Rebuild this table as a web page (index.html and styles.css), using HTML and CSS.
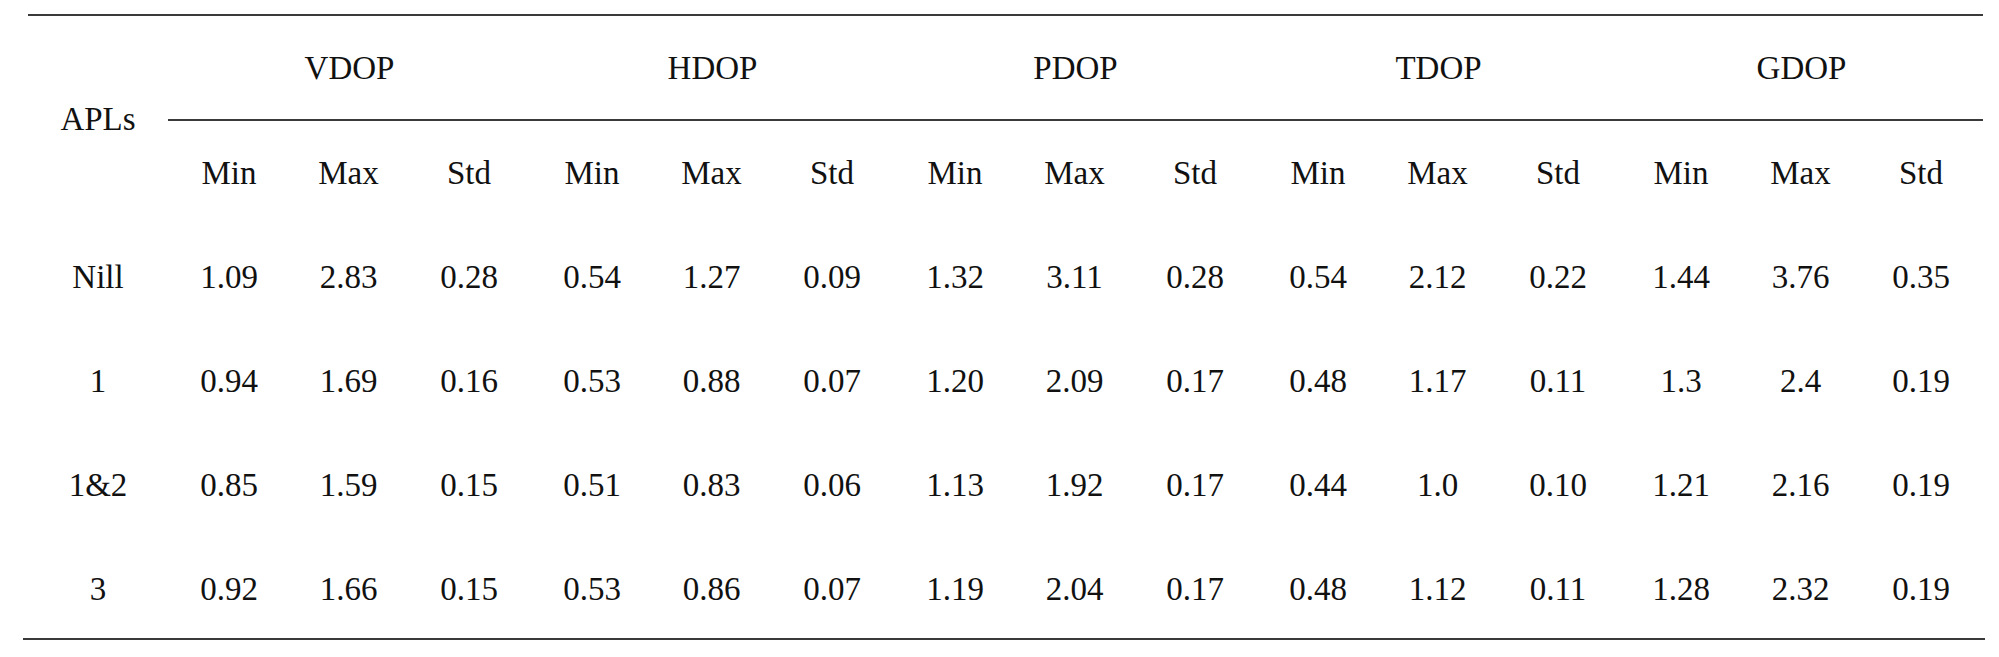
FILE: index.html
```html
<!DOCTYPE html>
<html>
<head>
<meta charset="utf-8">
<link rel="stylesheet" href="styles.css">
</head>
<body>
<div class="sheet">
  <div class="rule rule-top"></div>
  <div class="grid">
    <div class="cell apls">APLs</div>
    <div class="cell group">VDOP</div>
    <div class="cell group">HDOP</div>
    <div class="cell group">PDOP</div>
    <div class="cell group">TDOP</div>
    <div class="cell group">GDOP</div>

    <div class="cell">Min</div><div class="cell">Max</div><div class="cell">Std</div>
    <div class="cell">Min</div><div class="cell">Max</div><div class="cell">Std</div>
    <div class="cell">Min</div><div class="cell">Max</div><div class="cell">Std</div>
    <div class="cell">Min</div><div class="cell">Max</div><div class="cell">Std</div>
    <div class="cell">Min</div><div class="cell">Max</div><div class="cell">Std</div>

    <div class="cell">Nill</div>
    <div class="cell">1.09</div><div class="cell">2.83</div><div class="cell">0.28</div>
    <div class="cell">0.54</div><div class="cell">1.27</div><div class="cell">0.09</div>
    <div class="cell">1.32</div><div class="cell">3.11</div><div class="cell">0.28</div>
    <div class="cell">0.54</div><div class="cell">2.12</div><div class="cell">0.22</div>
    <div class="cell">1.44</div><div class="cell">3.76</div><div class="cell">0.35</div>

    <div class="cell">1</div>
    <div class="cell">0.94</div><div class="cell">1.69</div><div class="cell">0.16</div>
    <div class="cell">0.53</div><div class="cell">0.88</div><div class="cell">0.07</div>
    <div class="cell">1.20</div><div class="cell">2.09</div><div class="cell">0.17</div>
    <div class="cell">0.48</div><div class="cell">1.17</div><div class="cell">0.11</div>
    <div class="cell">1.3</div><div class="cell">2.4</div><div class="cell">0.19</div>

    <div class="cell">1&amp;2</div>
    <div class="cell">0.85</div><div class="cell">1.59</div><div class="cell">0.15</div>
    <div class="cell">0.51</div><div class="cell">0.83</div><div class="cell">0.06</div>
    <div class="cell">1.13</div><div class="cell">1.92</div><div class="cell">0.17</div>
    <div class="cell">0.44</div><div class="cell">1.0</div><div class="cell">0.10</div>
    <div class="cell">1.21</div><div class="cell">2.16</div><div class="cell">0.19</div>

    <div class="cell last">3</div>
    <div class="cell last">0.92</div><div class="cell last">1.66</div><div class="cell last">0.15</div>
    <div class="cell last">0.53</div><div class="cell last">0.86</div><div class="cell last">0.07</div>
    <div class="cell last">1.19</div><div class="cell last">2.04</div><div class="cell last">0.17</div>
    <div class="cell last">0.48</div><div class="cell last">1.12</div><div class="cell last">0.11</div>
    <div class="cell last">1.28</div><div class="cell last">2.32</div><div class="cell last">0.19</div>
  </div>
  <div class="rule rule-bottom"></div>
</div>
</body>
</html>
```

FILE: styles.css
```css
html, body {
  margin: 0;
  padding: 0;
  background: #ffffff;
}

body {
  font-family: "Times New Roman", "Liberation Serif", serif;
  font-size: 33px;
  color: #111111;
}

.sheet {
  width: 1955px;
  margin: 14px 0 0 28px;
}

.rule {
  height: 2px;
  background: #3a3a3a;
}

.rule-bottom {
  margin-left: -5px;
  width: calc(100% + 7px);
}

.grid {
  display: grid;
  grid-template-columns: 140px repeat(5, 122px 117px 124px);
}

.cell {
  text-align: center;
  line-height: 40px;
  padding: 32px 0 32px;
  white-space: nowrap;
}

.apls {
  grid-row: span 2;
  padding-top: 83px;
  padding-bottom: 0;
}

.group {
  grid-column: span 3;
  padding-bottom: 31px;
  border-bottom: 2px solid #3a3a3a;
}

.last {
  padding-bottom: 29px;
}
```
